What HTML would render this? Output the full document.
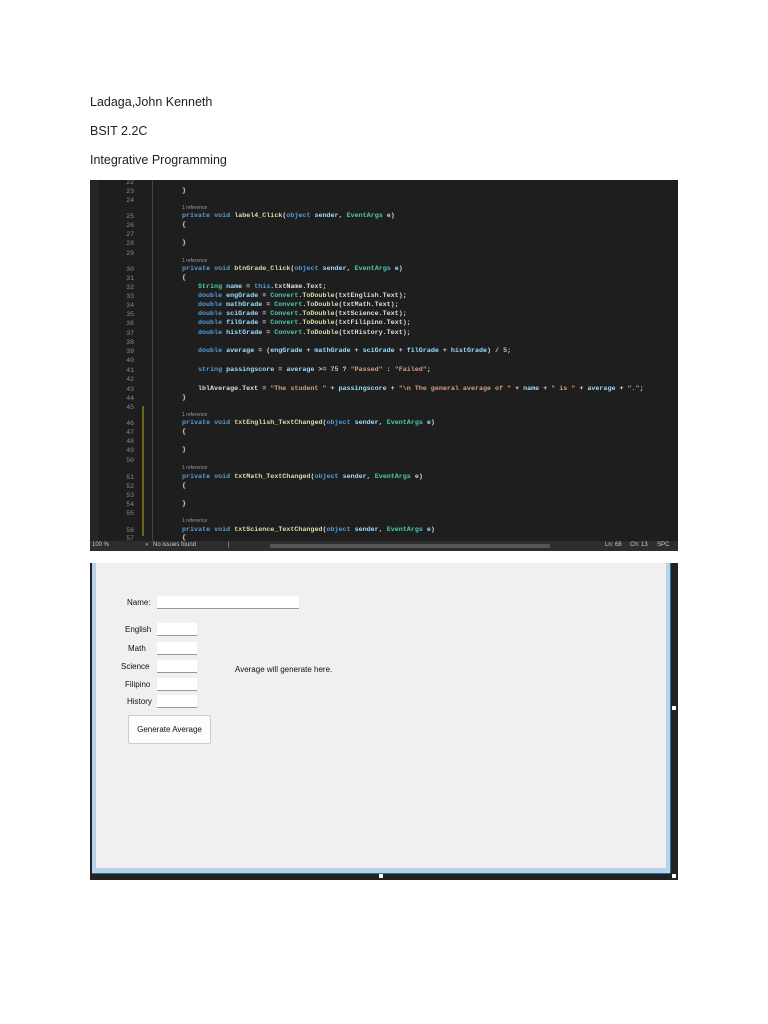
<!DOCTYPE html>
<html><head><meta charset="utf-8"><style>
body{margin:0;width:768px;height:1024px;background:#fff;position:relative;overflow:hidden;font-family:"Liberation Sans",sans-serif}
.h{position:absolute;left:90px;font-family:"Liberation Sans",sans-serif;font-size:12.5px;color:#222}
#code{position:absolute;left:90px;top:180px;width:588px;height:371px;background:#1e1e1e;overflow:hidden}
.l{position:absolute;left:0;white-space:pre;font-family:"Liberation Mono",monospace;font-size:6.7px;line-height:9px;color:#dcdcdc;font-weight:bold}
.n{position:absolute;width:44px;text-align:right;font-family:"Liberation Mono",monospace;font-size:6.5px;color:#8a8a8a;line-height:9px}
.r{position:absolute;left:92px;font-size:5px;color:#999;line-height:6px}
.k{color:#569cd6}.t{color:#4ec9b0}.s{color:#d69d85}.m{color:#dcdcaa}.v{color:#9cdcfe}.g{color:#b5cea8}
#status{position:absolute;left:0;top:361px;width:588px;height:10px;background:#2d2d30;font-size:6px;color:#ccc}
#form{position:absolute;left:90px;top:563px;width:588px;height:317px;background:#222}
.lab{position:absolute;font-size:8px;color:#111}
.tb{position:absolute;background:#fff;border-bottom:1px solid #999;height:12px}
</style></head><body>
<div class="h" style="top:95px">Ladaga,John Kenneth</div>
<div class="h" style="top:124px">BSIT 2.2C</div>
<div class="h" style="top:153px">Integrative Programming</div>

<div id="code">
<div style="position:absolute;left:0;top:0;width:8px;height:361px;background:#252526"></div>
<div style="position:absolute;left:52px;top:226px;width:2px;height:130px;background:#6b6320"></div>
<div style="position:absolute;left:62px;top:0;width:1px;height:361px;background:#444"></div>
<div id="lines"></div>
<div id="status">
<span style="position:absolute;left:2px;top:1px">100 %</span>
<span style="position:absolute;left:55px;top:1px;color:#4caf50">●</span><span style="position:absolute;left:63px;top:1px">No issues found</span>
<span style="position:absolute;left:138px;top:1px">|</span>
<div style="position:absolute;left:180px;top:3px;width:280px;height:4px;background:#555"></div>
<span style="position:absolute;left:515px;top:1px">Ln: 68</span><span style="position:absolute;left:540px;top:1px">Ch: 13</span><span style="position:absolute;left:567px;top:1px">SPC</span>
</div>
</div>

<div id="form">
<div style="position:absolute;left:2px;top:0;width:578px;height:310px;background:#b9d1ea"></div>
<div style="position:absolute;left:6px;top:0;width:570px;height:305px;background:#f0f0f0"></div>
<div style="position:absolute;left:2px;top:310px;width:578px;height:1px;background:#1c7a8c"></div>
<div style="position:absolute;left:580px;top:0;width:1px;height:310px;background:#1c7a8c"></div>
<div style="position:absolute;left:289px;top:311px;width:4px;height:4px;background:#fff"></div>
<div style="position:absolute;left:582px;top:143px;width:4px;height:4px;background:#fff"></div>
<div style="position:absolute;left:582px;top:311px;width:4px;height:4px;background:#fff"></div>
<div class="lab" style="left:37px;top:35px">Name:</div>
<div class="tb" style="left:67px;top:33px;width:142px"></div>
<div class="lab" style="left:35px;top:62px">English</div><div class="tb" style="left:67px;top:60px;width:40px"></div>
<div class="lab" style="left:38px;top:81px">Math</div><div class="tb" style="left:67px;top:79px;width:40px"></div>
<div class="lab" style="left:31px;top:99px">Science</div><div class="tb" style="left:67px;top:97px;width:40px"></div>
<div class="lab" style="left:35px;top:117px">Filipino</div><div class="tb" style="left:67px;top:115px;width:40px"></div>
<div class="lab" style="left:37px;top:134px">History</div><div class="tb" style="left:67px;top:132px;width:40px"></div>
<div class="lab" style="left:145px;top:102px">Average will generate here.</div>
<div style="position:absolute;left:38px;top:152px;width:81px;height:27px;background:#fdfdfd;border:1px solid #ccc;border-radius:2px;font-size:8px;line-height:27px;text-align:center;color:#111">Generate Average</div>
</div>

<script>
var L=[
[22,182,0,''],[23,191,0,'}'],[24,200,0,''],['r',208],
[25,216,0,'<span class="k">private void</span> <span class="m">label4_Click</span>(<span class="k">object</span> <span class="v">sender</span>, <span class="t">EventArgs</span> <span class="v">e</span>)'],
[26,225,0,'{'],[27,234,0,''],[28,243,0,'}'],[29,253,0,''],['r',261],
[30,269,0,'<span class="k">private void</span> <span class="m">btnGrade_Click</span>(<span class="k">object</span> <span class="v">sender</span>, <span class="t">EventArgs</span> <span class="v">e</span>)'],
[31,278,0,'{'],
[32,287,1,'<span class="t">String</span> <span class="v">name</span> = <span class="k">this</span>.txtName.Text;'],
[33,296,1,'<span class="k">double</span> <span class="v">engGrade</span> = <span class="t">Convert</span>.<span class="m">ToDouble</span>(txtEnglish.Text);'],
[34,305,1,'<span class="k">double</span> <span class="v">mathGrade</span> = <span class="t">Convert</span>.<span class="m">ToDouble</span>(txtMath.Text);'],
[35,314,1,'<span class="k">double</span> <span class="v">sciGrade</span> = <span class="t">Convert</span>.<span class="m">ToDouble</span>(txtScience.Text);'],
[36,323,1,'<span class="k">double</span> <span class="v">filGrade</span> = <span class="t">Convert</span>.<span class="m">ToDouble</span>(txtFilipino.Text);'],
[37,333,1,'<span class="k">double</span> <span class="v">histGrade</span> = <span class="t">Convert</span>.<span class="m">ToDouble</span>(txtHistory.Text);'],
[38,342,0,''],
[39,351,1,'<span class="k">double</span> <span class="v">average</span> = (<span class="v">engGrade</span> + <span class="v">mathGrade</span> + <span class="v">sciGrade</span> + <span class="v">filGrade</span> + <span class="v">histGrade</span>) / <span class="g">5</span>;'],
[40,360,0,''],
[41,370,1,'<span class="k">string</span> <span class="v">passingscore</span> = <span class="v">average</span> &gt;= <span class="g">75</span> ? <span class="s">"Passed"</span> : <span class="s">"Failed"</span>;'],
[42,379,0,''],
[43,389,1,'lblAverage.Text = <span class="s">"The student "</span> + <span class="v">passingscore</span> + <span class="s">"\\n The general average of "</span> + <span class="v">name</span> + <span class="s">" is "</span> + <span class="v">average</span> + <span class="s">"."</span>;'],
[44,398,0,'}'],[45,407,0,''],['r',415],
[46,423,0,'<span class="k">private void</span> <span class="m">txtEnglish_TextChanged</span>(<span class="k">object</span> <span class="v">sender</span>, <span class="t">EventArgs</span> <span class="v">e</span>)'],
[47,432,0,'{'],[48,441,0,''],[49,450,0,'}'],[50,460,0,''],['r',468],
[51,477,0,'<span class="k">private void</span> <span class="m">txtMath_TextChanged</span>(<span class="k">object</span> <span class="v">sender</span>, <span class="t">EventArgs</span> <span class="v">e</span>)'],
[52,486,0,'{'],[53,495,0,''],[54,504,0,'}'],[55,513,0,''],['r',521],
[56,530,0,'<span class="k">private void</span> <span class="m">txtScience_TextChanged</span>(<span class="k">object</span> <span class="v">sender</span>, <span class="t">EventArgs</span> <span class="v">e</span>)'],
[57,538,0,'{']];
var h='';
L.forEach(function(a){
 if(a[0]=='r'){h+='<div class="r" style="top:'+(a[1]-180-3)+'px">1 reference</div>';return;}
 var y=a[1]-180-4.5;
 h+='<div class="n" style="left:0;top:'+y+'px">'+a[0]+'</div>';
 h+='<div class="l" style="left:'+(a[2]?108:92)+'px;top:'+y+'px">'+a[3]+'</div>';
});
document.getElementById('lines').innerHTML=h;
</script>
</body></html>
